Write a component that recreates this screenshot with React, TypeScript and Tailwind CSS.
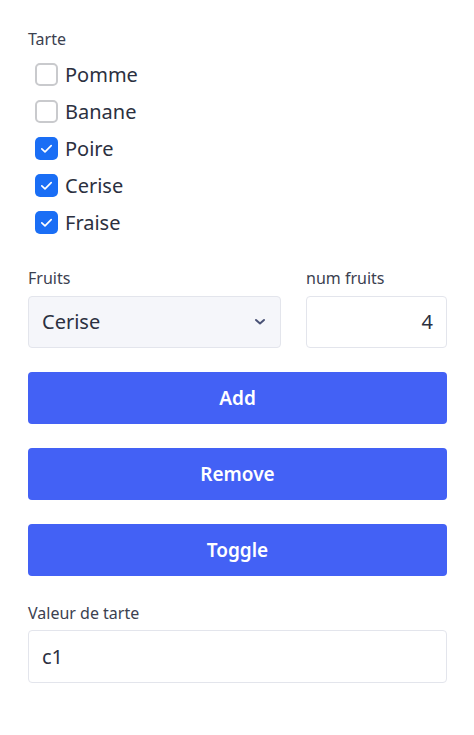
import React from "react";

const fruits = [
  { name: "Pomme", checked: false },
  { name: "Banane", checked: false },
  { name: "Poire", checked: true },
  { name: "Cerise", checked: true },
  { name: "Fraise", checked: true },
];

const Check: React.FC<{ checked: boolean }> = ({ checked }) =>
  checked ? (
    <div className="w-[23px] h-[23px] rounded-[5px] bg-[#1a6ef5] flex items-center justify-center">
      <svg width="15" height="15" viewBox="0 0 16 16" fill="none">
        <path d="M3 8.3l3.4 3.2L13 5" stroke="white" strokeWidth="1.8" strokeLinecap="round" strokeLinejoin="round" />
      </svg>
    </div>
  ) : (
    <div className="w-[23px] h-[23px] rounded-[5px] border-2 border-[#c9cacd] bg-white" />
  );

const Button: React.FC<{ label: string }> = ({ label }) => (
  <button className="w-full h-[52px] rounded-[4px] bg-[#4361f5] text-white text-[19px] font-semibold flex items-center justify-center">
    {label}
  </button>
);

export default function App() {
  return (
    <div
      className="w-[474px] min-h-[735px] bg-white pl-[28px] pr-[27px] pt-[28px] text-[#2b3040]"
      style={{ fontFamily: '"Noto Sans", "Open Sans", sans-serif' }}
    >
      <div className="text-[16px] leading-[22px] text-[#3b4150]">Tarte</div>
      <div className="mt-[6px] ml-[7px] flex flex-col">
        {fruits.map((f) => (
          <div key={f.name} className="h-[37px] flex items-center gap-[7px]">
            <Check checked={f.checked} />
            <span className="text-[20px]">{f.name}</span>
          </div>
        ))}
      </div>

      <div className="mt-[27px] flex gap-[25px]">
        <div className="w-[253px] flex flex-col">
          <div className="text-[16px] leading-[20px] text-[#3b4150] mb-[8px]">Fruits</div>
          <div className="h-[52px] rounded-[4px] border border-[#e3e5ec] bg-[#f5f6fa] flex items-center justify-between pl-[13px] pr-[14px]">
            <span className="text-[20px]">Cerise</span>
            <svg width="12" height="8" viewBox="0 0 12 8" fill="none">
              <path d="M2 2l4 3.5L10 2" stroke="#4a5276" strokeWidth="2" strokeLinecap="round" strokeLinejoin="round" />
            </svg>
          </div>
        </div>
        <div className="flex-1 flex flex-col">
          <div className="text-[16px] leading-[20px] text-[#3b4150] mb-[8px]">num fruits</div>
          <div className="h-[52px] rounded-[4px] border border-[#e3e5ec] bg-white flex items-center justify-end pr-[13px]">
            <span className="text-[20px]">4</span>
          </div>
        </div>
      </div>

      <div className="mt-[24px] flex flex-col gap-[24px]">
        <Button label="Add" />
        <Button label="Remove" />
        <Button label="Toggle" />
      </div>

      <div className="mt-[27px] text-[16px] leading-[20px] text-[#3b4150] mb-[7px]">Valeur de tarte</div>
      <div className="h-[53px] rounded-[4px] border border-[#e3e5ec] bg-white flex items-center pl-[13px]">
        <span className="text-[20px]">c1</span>
      </div>
    </div>
  );
}
